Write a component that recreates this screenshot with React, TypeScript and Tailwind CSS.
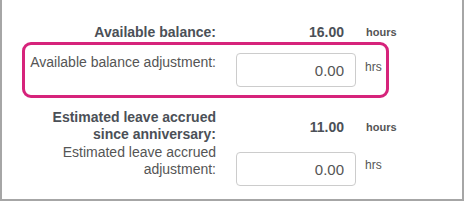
import React from 'react'

const labelBold = "text-[14px] leading-[17px] font-bold text-[#4b5057] text-right"
const labelReg = "text-[14px] leading-[17px] text-[#555] text-right"

function HoursInput({ value }: { value: string }) {
  return (
    <input
      readOnly
      value={value}
      className="w-[120px] h-[34px] border border-[#cccccc] rounded-[4px] bg-white pr-[11px] text-right text-[15px] text-[#555] outline-none"
    />
  )
}

export default function App() {
  return (
    <div className="w-[464px] h-[201px] bg-white font-['Liberation_Sans',Arial,sans-serif]">
      <div className="w-[464px] h-[201px] border-l-2 border-r-2 border-b-2 border-[#a6a6a6] pt-[22px]">
        {/* Available balance */}
        <div className="flex items-center h-[20px]">
          <div className={`w-[214px] ${labelBold} leading-[20px]`}>Available balance:</div>
          <div className="w-[128px] text-right text-[14px] font-bold text-[#4b5057] pt-[1px]">16.00</div>
          <div className="pl-[22px] text-[11px] font-bold text-[#555] pt-[1px]">hours</div>
        </div>

        {/* highlighted adjustment row */}
        <div className="ml-[20px] w-[367px] border-[3px] border-[#d6237b] rounded-[9px] py-[8px] flex items-start">
          <div className="w-[191px] text-[14px] leading-[18px] text-[#555] text-right">
            Available balance adjustment:
          </div>
          <div className="ml-[20px]">
            <HoursInput value="0.00" />
          </div>
          <div className="ml-[9px] mt-[7px] text-[12px] leading-[14px] text-[#555]">hrs</div>
        </div>

        {/* Estimated leave accrued */}
        <div className="flex items-center mt-[11px]">
          <div className={`w-[214px] ${labelBold}`}>
            Estimated leave accrued
            <br />
            since anniversary:
          </div>
          <div className="w-[128px] text-right text-[14px] font-bold text-[#4b5057] pt-[2px]">11.00</div>
          <div className="pl-[22px] text-[11px] font-bold text-[#555] pt-[2px]">hours</div>
        </div>

        <div className="flex items-start mt-[1px]">
          <div className={`w-[214px] ${labelReg}`}>
            Estimated leave accrued
            <br />
            adjustment:
          </div>
          <div className="ml-[20px] mt-[8px]">
            <HoursInput value="0.00" />
          </div>
          <div className="ml-[9px] mt-[14px] text-[12px] leading-[14px] text-[#555]">hrs</div>
        </div>
      </div>
    </div>
  )
}
